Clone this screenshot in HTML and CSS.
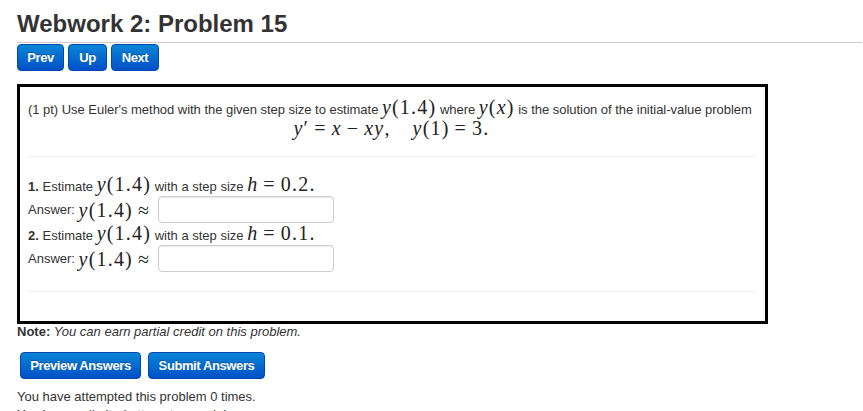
FILE: index.html
```html
<!DOCTYPE html>
<html>
<head>
<meta charset="utf-8">
<title>Webwork 2: Problem 15</title>
<link rel="stylesheet" href="styles.css">
</head>
<body>
<div class="page">
  <h1 class="title">Webwork 2: Problem 15</h1>
  <div class="nav">
    <span class="btn">Prev</span>
    <span class="btn">Up</span>
    <span class="btn">Next</span>
  </div>

  <div class="problem">
    <div class="line1">(1 pt) Use Euler's method with the given step size to estimate <span class="m"><i>y</i>(1.4)</span> where <span class="m"><i>y</i>(<i>x</i>)</span> is the solution of the initial-value problem</div>
    <div class="display"><span class="m"><i>y</i>′<span class="op">=</span><i>x</i><span class="op">−</span><i>xy</i>,<span class="quad"></span><i>y</i>(1)<span class="op">=</span>3.</span></div>
    <div class="rule"></div>
    <div class="item"><b>1.</b> Estimate <span class="m"><i>y</i>(1.4)</span> with a step size <span class="m"><i>h</i><span class="op">=</span>0.2.</span></div>
    <div class="answer">Answer: <span class="m"><i>y</i>(1.4)<span class="op">≈</span></span><span class="input"></span></div>
    <div class="item"><b>2.</b> Estimate <span class="m"><i>y</i>(1.4)</span> with a step size <span class="m"><i>h</i><span class="op">=</span>0.1.</span></div>
    <div class="answer">Answer: <span class="m"><i>y</i>(1.4)<span class="op">≈</span></span><span class="input"></span></div>
    <div class="rule rule2"></div>
  </div>

  <div class="note"><b>Note:</b> <i>You can earn partial credit on this problem.</i></div>

  <div class="actions">
    <span class="btn btn-lg">Preview Answers</span>
    <span class="btn btn-lg">Submit Answers</span>
  </div>

  <p class="status">You have attempted this problem 0 times.</p>
  <p class="status">You have unlimited attempts remaining.</p>
</div>
</body>
</html>
```

FILE: styles.css
```css
html, body {
  margin: 0;
  padding: 0;
  background: #fff;
}
body {
  font-family: "Liberation Sans", Arial, sans-serif;
  color: #333;
  font-size: 13px;
}
.page {
  padding: 0 1px 0 17px;
}
.title {
  margin: 0;
  padding-top: 10px;
  padding-bottom: 4px;
  font-size: 24px;
  line-height: 28px;
  font-weight: bold;
  color: #333;
  border-bottom: 1px solid #ccc;
}
.nav {
  display: flex;
  gap: 4px;
  margin-top: 1px;
}
.btn {
  display: inline-flex;
  align-items: center;
  justify-content: center;
  box-sizing: border-box;
  height: 27px;
  padding: 0 8px;
  border-radius: 4px;
  border: 1px solid #0048b0;
  background: linear-gradient(#0a86d6, #0050c8);
  color: #fff;
  font-weight: bold;
  font-size: 13px;
  white-space: nowrap;
  text-shadow: 0 -1px 0 rgba(0,0,0,.25);
  letter-spacing: -0.4px;
}
.nav .btn:nth-child(1) { width: 47px; }
.nav .btn:nth-child(2) { width: 39px; }
.nav .btn:nth-child(3) { width: 48px; }
.problem {
  margin-top: 13px;
  width: 751px;
  height: 240px;
  box-sizing: border-box;
  border: 3px solid #000;
  padding: 10px 10px 0 8px;
}
.m {
  font-family: "Liberation Serif", "Times New Roman", serif;
  font-size: 20px;
  line-height: 1;
  letter-spacing: 1.2px;
  color: #222;
  white-space: nowrap;
}
.op {
  padding: 0 5px;
}
.line1 {
  height: 21px;
  line-height: 20px;
  color: #333;
  white-space: nowrap;
  letter-spacing: -0.03px;
}
.display {
  height: 20px;
  line-height: 20px;
  text-align: center;
}
.quad {
  display: inline-block;
  width: 22px;
}
.rule {
  height: 1px;
  background: #eee;
  margin-top: 18px;
  margin-bottom: 17px;
}
.item {
  line-height: 22px;
  height: 22px;
}
.answer {
  display: flex;
  align-items: center;
  height: 27px;
  white-space: pre;
}
.input {
  display: inline-block;
  box-sizing: border-box;
  width: 176px;
  height: 27px;
  margin-left: 3px;
  border: 1px solid #ccc;
  border-radius: 4px;
  box-shadow: inset 0 1px 1px rgba(0,0,0,.075);
  background: #fff;
}
.rule2 {
  margin-top: 19px;
}
.note {
  line-height: 16px;
  color: #333;
}
.actions {
  display: flex;
  gap: 7px;
  margin-top: 12px;
  margin-left: 3px;
}
.actions .btn:nth-child(1) { width: 121px; }
.actions .btn:nth-child(2) { width: 117px; }
.status {
  margin: 0;
  font-size: 13px;
  line-height: 18px;
  color: #333;
}
.actions + .status {
  margin-top: 9px;
}
```
